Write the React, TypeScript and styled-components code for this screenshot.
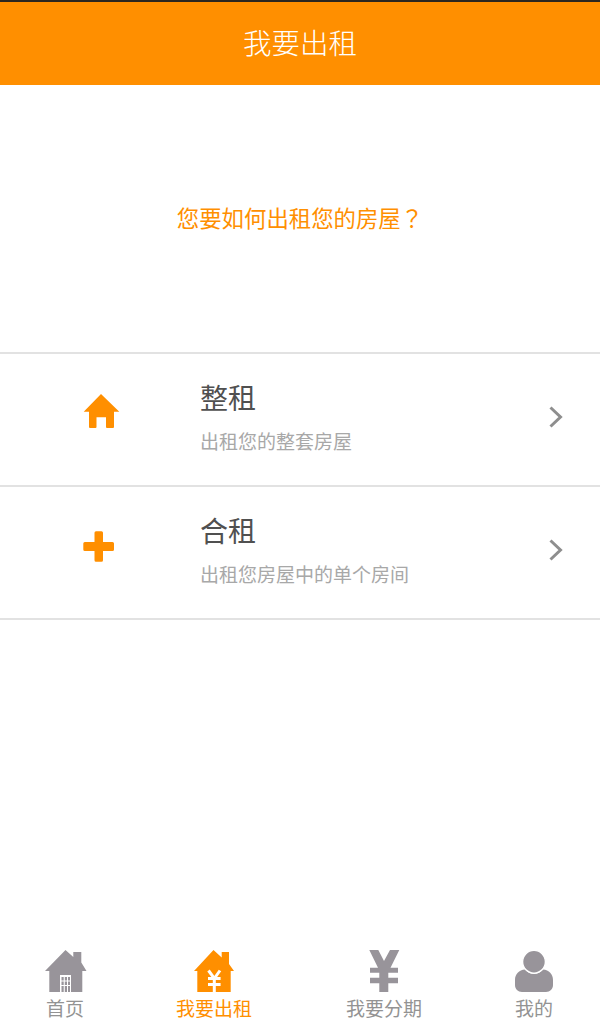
import React, { ReactElement } from 'react';
import styled, { createGlobalStyle } from 'styled-components';

const ORANGE = '#ff8f00';
const ICON_GREY = '#98949a';

const GlobalStyle = createGlobalStyle`
  html, body {
    margin: 0;
    padding: 0;
    background: #fff;
    font-family: "Noto Sans CJK SC", "Noto Sans", sans-serif;
  }
`;

function HomeTabIcon(): ReactElement {
  return (
    <svg width="44" height="42" viewBox="-2 0 44 42">
      <path fill={ICON_GREY} d="M20.5 0 28.300 7V2h8v10.500l5.200 8.500h-4.200V42H4.300V21H0Z" />
      <rect x="15" y="25" width="11" height="17" fill="#fff" />
      <g fill={ICON_GREY}>
        <rect x="16.500" y="27" width="2.200" height="3.500" />
        <rect x="19.800" y="27" width="2.200" height="3.500" />
        <rect x="23" y="27" width="2" height="3.500" />
        <rect x="16.500" y="31.500" width="2.200" height="3.500" />
        <rect x="19.800" y="31.500" width="2.200" height="3.500" />
        <rect x="23" y="31.500" width="2" height="3.500" />
        <rect x="16.500" y="36" width="2.200" height="6" />
        <rect x="19.800" y="36" width="2.200" height="6" />
        <rect x="23" y="36" width="2" height="6" />
      </g>
    </svg>
  );
}

function RentTabIcon(): ReactElement {
  return (
    <svg width="40" height="42" viewBox="0 0 40 42">
      <path fill={ORANGE} d="M19.500 0 27.700 7.500V2H35v12l5 7h-3.300V42H3.300V21H0Z" />
      <path
        fill="none"
        stroke="#fff"
        strokeWidth="3"
        d="M14.500 20.500 20.300 28.500 26 20.500M20.300 28.500V42M14 28.500h12.600M14 34.500h12.600"
      />
    </svg>
  );
}

function YenTabIcon(): ReactElement {
  return (
    <svg width="32" height="42" viewBox="0 0 32 42">
      <path
        fill={ICON_GREY}
        d="M1.300 0H10.300L16 11 22 0H31.300L22.500 17.700H30V22.700H20.300V27.700H30V33.300H20.300V42H11.300V33.300H2V27.700H11.300V22.700H2V17.700H10Z"
      />
    </svg>
  );
}

function UserTabIcon(): ReactElement {
  return (
    <svg width="38" height="42" viewBox="0 0 38 42">
      <path
        fill={ICON_GREY}
        d="M10 19.500C4 20 0 24 0 30v5c0 4 3 7 7 7h24c4 0 7-3 7-7v-5c0-6-4-10-10-10.500-2 2.500-5.500 4.500-9 4.500s-7-2-9-4.500Z"
      />
      <circle cx="19" cy="11.700" r="11.400" fill={ICON_GREY} stroke="#fff" strokeWidth="1.400" />
    </svg>
  );
}

function WholeIcon(): ReactElement {
  return (
    <svg width="40" height="40" viewBox="0 0 40 40">
      <path
        fill={ORANGE}
        d="M20 3 38.300 20.700H33V36a1 1 0 0 1-1 1h-6a1 1 0 0 1-1-1V26.300h-9.500V36a1 1 0 0 1-1 1H9a1 1 0 0 1-1-1V20.700H2.700Z"
      />
    </svg>
  );
}

function ShareIcon(): ReactElement {
  return (
    <svg width="40" height="40" viewBox="0 0 40 40">
      <path
        fill={ORANGE}
        d="M15 7.300h5.500a1.500 1.500 0 0 1 1.500 1.500V18h9.500a1.500 1.500 0 0 1 1.500 1.500v6a1.500 1.500 0 0 1-1.500 1.500H22v9.200a1.500 1.500 0 0 1-1.500 1.500H15a1.500 1.500 0 0 1-1.500-1.500V27H3.800a1.500 1.500 0 0 1-1.500-1.500v-6A1.500 1.500 0 0 1 3.800 18h9.700V8.800A1.500 1.500 0 0 1 15 7.300Z"
      />
    </svg>
  );
}

function Chevron(): ReactElement {
  return (
    <svg width="14" height="22" viewBox="0 0 14 22">
      <path fill="none" stroke="#8e8e8e" strokeWidth="3" d="M1.500 1.500 11.500 11l-10 9.500" />
    </svg>
  );
}

const rentOptions = [
  { title: '整租', desc: '出租您的整套房屋', icon: <WholeIcon /> },
  { title: '合租', desc: '出租您房屋中的单个房间', icon: <ShareIcon /> },
];

const tabs = [
  { label: '首页', icon: <HomeTabIcon />, active: false },
  { label: '我要出租', icon: <RentTabIcon />, active: true },
  { label: '我要分期', icon: <YenTabIcon />, active: false },
  { label: '我的', icon: <UserTabIcon />, active: false },
];

export default function App(): ReactElement {
  return (
    <Page>
      <GlobalStyle />
      <Header>我要出租</Header>
      <Question>
        您要如何出租您的房屋<QuestionMark>？</QuestionMark>
      </Question>
      <OptionList>
        {rentOptions.map((option) => (
          <OptionRow key={option.title}>
            <OptionIcon>{option.icon}</OptionIcon>
            <OptionText>
              <OptionTitle>{option.title}</OptionTitle>
              <OptionDesc>{option.desc}</OptionDesc>
            </OptionText>
            <OptionArrow>
              <Chevron />
            </OptionArrow>
          </OptionRow>
        ))}
      </OptionList>
      <TabBar>
        {tabs.map((tab) => (
          <TabItem key={tab.label} $active={tab.active}>
            <TabIcon>{tab.icon}</TabIcon>
            {tab.label}
          </TabItem>
        ))}
      </TabBar>
    </Page>
  );
}

const Page = styled.div`
  width: 600px;
  height: 1027px;
  display: flex;
  flex-direction: column;
  overflow: hidden;
  background: #fff;
`;

const Header = styled.header`
  height: 83px;
  border-top: 2px solid #2b2620;
  background: ${ORANGE};
  color: #fff;
  font-size: 28.5px;
  font-weight: 300;
  line-height: 79px;
  text-align: center;
`;

const Question = styled.div`
  box-sizing: border-box;
  height: 267px;
  padding-bottom: 4px;
  display: flex;
  align-items: center;
  justify-content: center;
  color: ${ORANGE};
  font-size: 22.4px;
`;

const QuestionMark = styled.span`
  font-family: "Noto Sans CJK TC", sans-serif;
`;

const OptionList = styled.div`
  border-top: 2px solid #e2e2e2;
`;

const OptionRow = styled.div`
  height: 131px;
  display: grid;
  grid-template-columns: 200px 1fr auto;
  border-bottom: 2px solid #e2e2e2;
`;

const OptionIcon = styled.div`
  padding: 37px 0 0 81px;
  line-height: 0;
`;

const OptionText = styled.div`
  padding-top: 25px;
`;

const OptionTitle = styled.div`
  color: #505050;
  font-size: 28px;
  line-height: 36px;
`;

const OptionDesc = styled.div`
  margin-top: 13.5px;
  color: #a8a8a8;
  font-size: 19px;
  line-height: 24px;
`;

const OptionArrow = styled.div`
  padding: 52px 37px 0 0;
  line-height: 0;
`;

const TabBar = styled.nav`
  margin-top: auto;
  padding-bottom: 7px;
  display: grid;
  grid-template-columns: 130px 168px 172px 128px;
  justify-items: center;
`;

const TabItem = styled.div<{ $active: boolean }>`
  display: flex;
  flex-direction: column;
  align-items: center;
  color: ${(p) => (p.$active ? ORANGE : '#939393')};
  font-size: 19px;
  line-height: 24px;
  white-space: nowrap;
`;

const TabIcon = styled.div`
  height: 42px;
  margin-bottom: 4px;
  line-height: 0;
`;
